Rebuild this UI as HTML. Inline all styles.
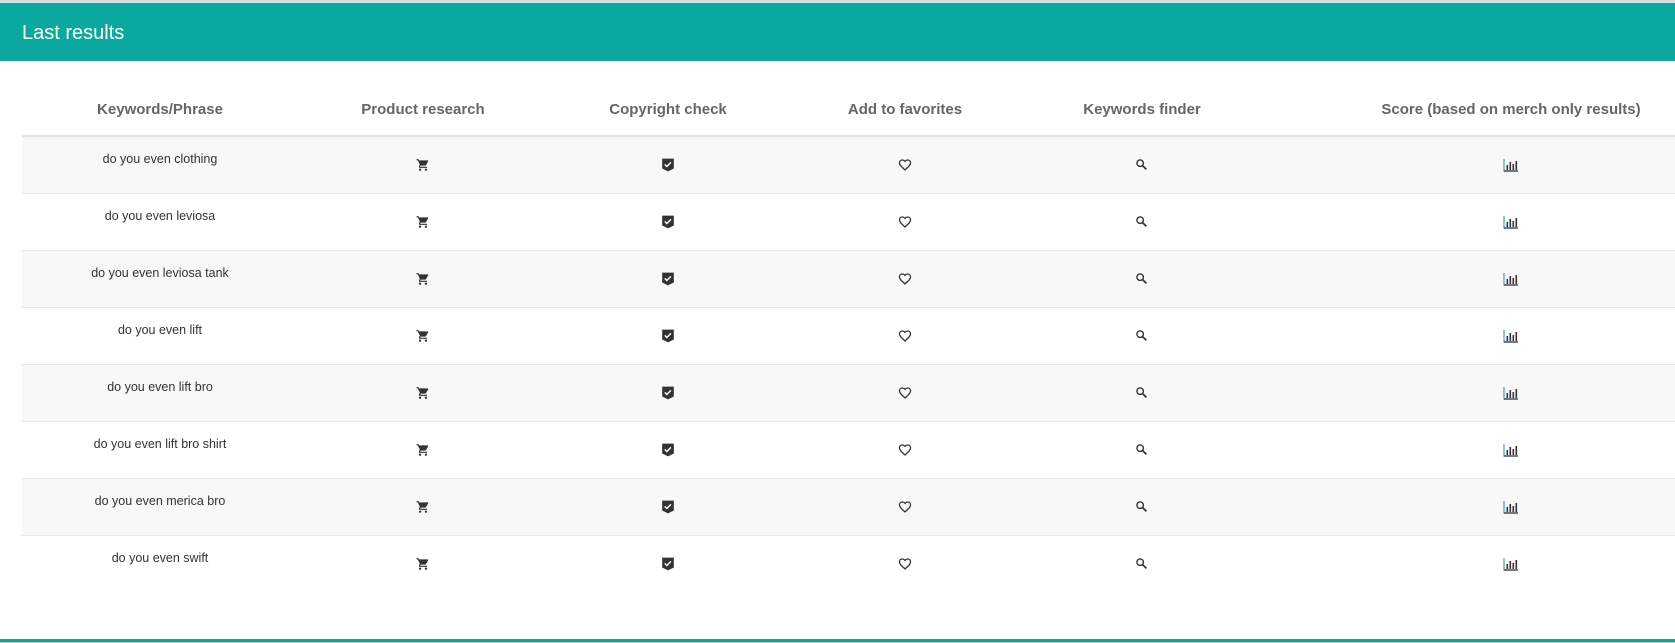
<!DOCTYPE html>
<html><head><meta charset="utf-8"><style>
*{margin:0;padding:0;box-sizing:border-box}
body{width:1675px;height:643px;background:#fff;font-family:"Liberation Sans",sans-serif;position:relative;overflow:hidden}
.top{position:absolute;left:0;top:0;width:1675px;height:3px;background:#ddd}
.hdr{position:absolute;left:0;top:3px;width:1675px;height:58px;background:#0ba8a0;color:#fff;font-size:20px;padding-left:22px;line-height:60px}
.th{position:absolute;top:101px;font-size:15px;font-weight:bold;color:#666;transform:translateX(-50%);white-space:nowrap}
.hline{position:absolute;left:22px;top:135px;width:1653px;height:2px;background:#e3e3e3}
.row{position:absolute;left:22px;width:1653px;height:57px;border-bottom:1px solid #e6e6e6}
.row.o{background:#f8f8f8}
.row.last{border-bottom:none}
.kw{position:absolute;top:15px;font-size:12.5px;color:#333;transform:translateX(-50%);white-space:nowrap}
.ic{position:absolute;top:21px;width:14px;height:14px;transform:translateX(-50%)}
.bot{position:absolute;left:0;top:639px;width:1675px;height:3px;background:#12a496}
.bot2{position:absolute;left:0;top:642px;width:1675px;height:1px;background:#bbb}
</style></head><body>
<div class="top"></div>
<div class="hdr">Last results</div>
<div class="th" style="left:160px">Keywords/Phrase</div>
<div class="th" style="left:423px">Product research</div>
<div class="th" style="left:668px">Copyright check</div>
<div class="th" style="left:905px">Add to favorites</div>
<div class="th" style="left:1142px">Keywords finder</div>
<div class="th" style="left:1511px">Score (based on merch only results)</div>
<div class="hline"></div>
<div id="rows"></div>
<script>
const kws=["do you even clothing","do you even leviosa","do you even leviosa tank","do you even lift","do you even lift bro","do you even lift bro shirt","do you even merica bro","do you even swift"];
const cart='<svg viewBox="0 0 24 24" width="14" height="14"><path fill="#333" d="M7 18c-1.1 0-2 .9-2 2s.9 2 2 2 2-.9 2-2-.9-2-2-2zM1 2v2h2l3.6 7.6-1.4 2.4c-.1.3-.2.6-.2 1 0 1.1.9 2 2 2h12v-2H7.4c-.1 0-.2-.1-.2-.2l.9-1.8h7.5c.8 0 1.4-.4 1.7-1l3.6-6.5c.1-.2.1-.3.1-.5 0-.6-.4-1-1-1H5.2l-.9-2H1zm16 16c-1.1 0-2 .9-2 2s.9 2 2 2 2-.9 2-2-.9-2-2-2z"/></svg>';
const shield='<svg viewBox="0 0 24 24" width="14" height="14"><path fill="#333" d="M2 1h20v17l-10 5-10-5z"/><path d="M6.5 11l3.5 3.5 7-7" stroke="#fff" stroke-width="2.4" fill="none"/></svg>';
const heart='<svg viewBox="0 0 24 24" width="14" height="14"><path fill="none" stroke="#333" stroke-width="2.2" d="M12 20.5l-1.3-1.2C5.6 14.7 2.5 11.9 2.5 8.3 2.5 5.6 4.6 3.5 7.3 3.5c1.8 0 3.6.9 4.7 2.2 1.1-1.3 2.9-2.2 4.7-2.2 2.7 0 4.8 2.1 4.8 4.8 0 3.6-3.1 6.4-8.2 11z"/></svg>';
const mag='<svg viewBox="0 0 24 24" width="13" height="13"><circle cx="9.5" cy="9.5" r="6" fill="none" stroke="#333" stroke-width="2.6"/><path d="M14 14l7 7" stroke="#333" stroke-width="3.2"/></svg>';
const bar='<svg viewBox="0 0 16 14" width="16" height="14"><path d="M1 1v12h14" stroke="#5a8fc0" stroke-width="1.2" fill="none"/><rect x="3.5" y="7" width="1.6" height="5" fill="#333"/><rect x="6.5" y="4" width="1.6" height="8" fill="#333"/><rect x="9.5" y="6" width="1.6" height="6" fill="#333"/><rect x="12.5" y="3" width="1.6" height="9" fill="#333"/><path d="M1 13h14" stroke="#333" stroke-width="1.2"/></svg>';
let h='';
kws.forEach((k,i)=>{
 const t=137+i*57;
 h+=`<div class="row${i%2==0?' o':''}${i==7?' last':''}" style="top:${t}px">
 <div class="kw" style="left:138px">${k}</div>
 <div class="ic" style="left:401px">${cart}</div>
 <div class="ic" style="left:646px">${shield}</div>
 <div class="ic" style="left:883px">${heart}</div>
 <div class="ic" style="left:1120px">${mag}</div>
 <div class="ic" style="left:1489px;width:16px">${bar}</div></div>`;
});
document.getElementById('rows').innerHTML=h;
</script>
<div class="bot"></div><div class="bot2"></div>
</body></html>
